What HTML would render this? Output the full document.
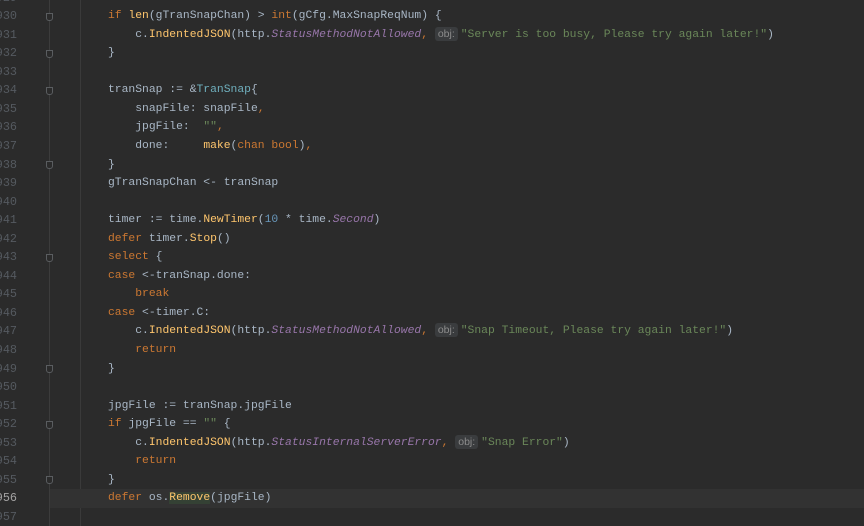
<!DOCTYPE html>
<html><head><style>
body{margin:0;width:864px;height:526px;background:#2b2b2b;overflow:hidden;position:relative;font-family:"Liberation Mono",monospace;font-size:11.35px;}
.ln{position:absolute;left:-10px;width:27px;text-align:right;color:#555a60;font-size:11.8px;}
.row{position:absolute;left:0;width:864px;height:18.54px;line-height:18.54px;}
.code{position:absolute;left:108px;color:#a9b7c6;white-space:pre;}
.k{color:#cc7832}.f{color:#ffc66d}.p{color:#9876aa;font-style:italic}.s{color:#6a8759}
.h{display:inline-block;background:#3a3c3e;color:#8c8c8c;font-family:"Liberation Sans",sans-serif;font-size:10.5px;line-height:14px;padding:0 3px;border-radius:3px;margin-right:3px;}
.cur{background:#323232;left:50px;width:814px}
.fold{position:absolute;left:46px;width:7px;height:8px;border:1px solid #5a5d60;box-sizing:border-box;border-radius:0 0 3px 3px;background:#2b2b2b}
.g{position:absolute;width:1px;background:#3a3a3a;}
</style></head><body>
<div class="g" style="left:49px;top:0;height:526px;background:#3c3c3c"></div>
<div class="g" style="left:80px;top:0;height:526px"></div>
<div class="row cur" style="top:489px"></div>
<div id="c"></div>
<script>
const L=[
[929,''],
[930,'<span class="k">if</span> <span class="f">len</span>(gTranSnapChan) &gt; <span class="k">int</span>(gCfg.MaxSnapReqNum) {'],
[931,'    c.<span class="f">IndentedJSON</span>(http.<span class="p">StatusMethodNotAllowed</span><span class="k">,</span> <span class="h">obj:</span><span class="s">"Server is too busy, Please try again later!"</span>)'],
[932,'}'],[933,''],
[934,'tranSnap := &amp;<span style="color:#6fafbd">TranSnap</span>{'],
[935,'    snapFile: snapFile<span class="k">,</span>'],
[936,'    jpgFile:  <span class="s">""</span><span class="k">,</span>'],
[937,'    done:     <span class="f">make</span>(<span class="k">chan bool</span>)<span class="k">,</span>'],
[938,'}'],[939,'gTranSnapChan &lt;- tranSnap'],[940,''],
[941,'timer := time.<span class="f">NewTimer</span>(<span style="color:#6897bb">10</span> * time.<span class="p">Second</span>)'],
[942,'<span class="k">defer</span> timer.<span class="f">Stop</span>()'],
[943,'<span class="k">select</span> {'],
[944,'<span class="k">case</span> &lt;-tranSnap.done:'],
[945,'    <span class="k">break</span>'],
[946,'<span class="k">case</span> &lt;-timer.C:'],
[947,'    c.<span class="f">IndentedJSON</span>(http.<span class="p">StatusMethodNotAllowed</span><span class="k">,</span> <span class="h">obj:</span><span class="s">"Snap Timeout, Please try again later!"</span>)'],
[948,'    <span class="k">return</span>'],
[949,'}'],[950,''],
[951,'jpgFile := tranSnap.jpgFile'],
[952,'<span class="k">if</span> jpgFile == <span class="s">""</span> {'],
[953,'    c.<span class="f">IndentedJSON</span>(http.<span class="p">StatusInternalServerError</span><span class="k">,</span> <span class="h">obj:</span><span class="s">"Snap Error"</span>)'],
[954,'    <span class="k">return</span>'],
[955,'}'],
[956,'<span class="k">defer</span> os.<span class="f" style="background:#344134">Remove</span>(jpgFile)'],
[957,'']];
const folds=[930,932,934,938,943,949,952,955];
let h='';
for(const [n,t] of L){const top=-11.3+(n-929)*18.54;
h+=`<div class="row" style="top:${top}px"><span class="ln" ${n==956?'style="color:#a4a3a3"':''}>${n}</span><span class="code">${t}</span></div>`;
if(folds.includes(n))h+=`<div class="fold" style="top:${top+5.5}px"></div>`;}
document.getElementById('c').innerHTML=h;
</script>
</body></html>
